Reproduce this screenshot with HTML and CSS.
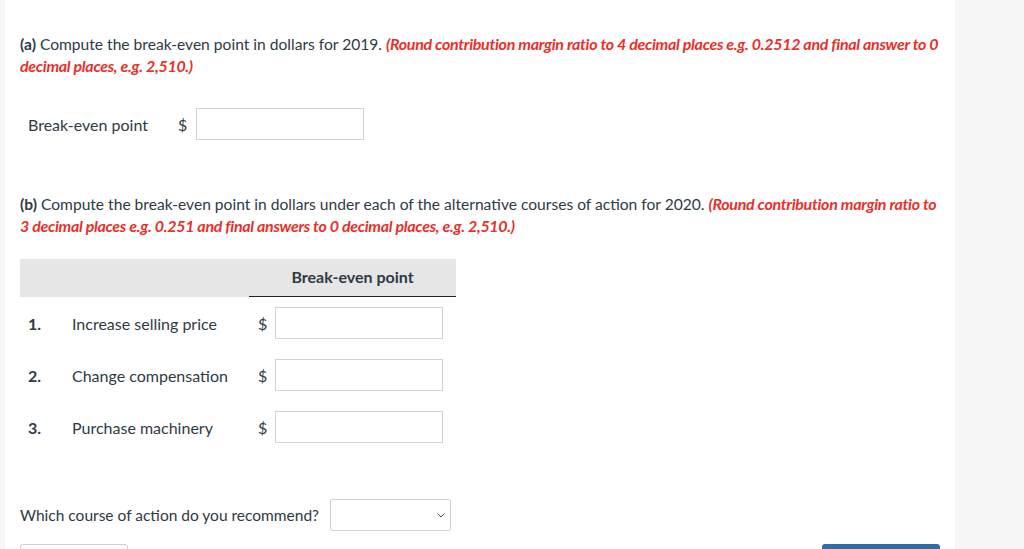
FILE: index.html
```html
<!DOCTYPE html>
<html lang="en">
<head>
<meta charset="utf-8">
<title>Break-even point</title>
<link rel="stylesheet" href="styles.css">
</head>
<body>
<div class="page">
  <main class="content">
    <p class="q q-a"><b>(a)</b> Compute the break-even point in dollars for 2019. <em class="hint">(Round contribution margin ratio to 4 decimal places e.g. 0.2512 and final answer to 0 decimal places, e.g. 2,510.)</em></p>

    <div class="answer-row">
      <span class="answer-label">Break-even point</span>
      <span class="dollar">$</span>
      <span class="field"></span>
    </div>

    <p class="q q-b"><b>(b)</b> Compute the break-even point in dollars under each of the alternative courses of action for 2020. <em class="hint">(Round contribution margin ratio to 3 decimal places e.g. 0.251 and final answers to 0 decimal places, e.g. 2,510.)</em></p>

    <div class="table">
      <div class="thead">
        <div class="th-blank"></div>
        <div class="th">Break-even point</div>
      </div>
      <div class="tr">
        <span class="num">1.</span>
        <span class="label">Increase selling price</span>
        <span class="cell"><span class="dollar">$</span><span class="field"></span></span>
      </div>
      <div class="tr">
        <span class="num">2.</span>
        <span class="label">Change compensation</span>
        <span class="cell"><span class="dollar">$</span><span class="field"></span></span>
      </div>
      <div class="tr">
        <span class="num">3.</span>
        <span class="label">Purchase machinery</span>
        <span class="cell"><span class="dollar">$</span><span class="field"></span></span>
      </div>
    </div>

    <div class="recommend">
      <span class="rec-text">Which course of action do you recommend?</span>
      <span class="select">
        <svg class="chev" width="8" height="5" viewBox="0 0 8 5"><path d="M0.5 0.5 L4 4 L7.5 0.5" fill="none" stroke="#555" stroke-width="1"/></svg>
      </span>
    </div>

    <div class="buttons">
      <span class="btn-outline"></span>
      <span class="btn-primary"></span>
    </div>
  </main>
</div>
</body>
</html>
```

FILE: styles.css
```css
html, body {
  margin: 0;
  padding: 0;
}
body {
  background: #f7f7f7;
  font-family: Lato, "Open Sans", sans-serif;
  font-size: 16px;
  color: #2f3a44;
  height: 549px;
  overflow: hidden;
}
.page {
  display: flex;
  height: 549px;
}
.content {
  margin-left: 5px;
  width: 920px;
  height: 516px;
  overflow: hidden;
  padding: 33px 15px 0 15px;
  background: #ffffff;
}
.q {
  margin: 0 -6px 0 0;
  font-size: 15.6px;
  line-height: 22px;
}
.q b {
  font-weight: 700;
}
.hint {
  color: #e8302b;
  font-size: 16px;
  font-weight: 700;
  font-style: italic;
  letter-spacing: -0.3px;
}
.answer-row {
  display: flex;
  align-items: center;
  margin-top: 31px;
  padding-left: 8px;
  height: 32px;
}
.answer-label {
  width: 150px;
}
.dollar {
  width: 18px;
}
.field {
  display: block;
  width: 166px;
  height: 30px;
  border: 1px solid #d2d2d2;
  background: #fff;
}
.q-b {
  margin-top: 53px;
}
.table {
  margin-top: 22px;
  width: 436px;
}
.thead {
  display: flex;
  height: 38px;
  background: #e6e6e6;
}
.th-blank {
  width: 229px;
}
.th {
  flex: 1;
  text-align: center;
  font-weight: 700;
  line-height: 36px;
  border-bottom: 1.5px solid #222;
}
.tr {
  display: flex;
  align-items: center;
  height: 52px;
}
.num {
  width: 44px;
  padding-left: 8px;
  font-weight: 700;
}
.label {
  width: 177px;
}
.cell {
  display: flex;
  align-items: center;
  padding-left: 9px;
}
.cell .dollar {
  width: 17px;
}
.recommend {
  display: flex;
  align-items: center;
  margin-top: 46px;
  height: 32px;
}
.rec-text {
  font-size: 15.5px;
}
.select {
  position: relative;
  display: block;
  margin-left: 11px;
  width: 119px;
  height: 30px;
  border: 1px solid #d2d2d2;
  border-radius: 2px;
  background: #fff;
}
.chev {
  position: absolute;
  right: 5px;
  top: 13px;
}
.buttons {
  display: flex;
  justify-content: space-between;
  margin-top: 13px;
}
.btn-outline {
  display: block;
  width: 106px;
  height: 34px;
  border: 1px solid #cfcfcf;
  border-radius: 3px;
}
.btn-primary {
  display: block;
  width: 118px;
  height: 36px;
  background: #2f6ea5;
  border-radius: 3px;
}
```
